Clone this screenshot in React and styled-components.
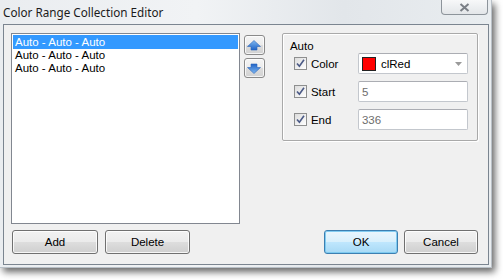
import React from "react";
import styled, { createGlobalStyle, css } from "styled-components";

const Global = createGlobalStyle`
  html, body { margin: 0; padding: 0; background: #ffffff; }
  body { font-family: "Liberation Sans", Arial, sans-serif; }
  * { box-sizing: border-box; }
`;

const Stage = styled.div`
  width: 503px;
  height: 280px;
  overflow: hidden;
  background: #ffffff;
`;

const Window = styled.div`
  width: 492px;
  height: 268px;
  display: flex;
  flex-direction: column;
  background: linear-gradient(90deg, #eaedf0 0%, #f1f3f5 40%, #e2e6ea 70%, #e9edf0 100%);
  box-shadow: 3px 4px 7px rgba(0, 0, 0, 0.6);
  border-right: 1px solid #b9c0c7;
  border-bottom: 1px solid #b9c0c7;
`;

const TitleBar = styled.div`
  height: 24px;
  display: flex;
  align-items: flex-start;
  justify-content: space-between;
  padding: 0 3px 0 3px;
`;

const Title = styled.div`
  font-family: "Noto Sans", "Open Sans", sans-serif;
  font-size: 11.7px;
  color: #1b1b1b;
  margin-top: 4px;
`;

const CloseButton = styled.div`
  width: 47px;
  height: 15px;
  border: 1px solid #8d949b;
  border-top: none;
  border-radius: 0 0 4px 4px;
  background: linear-gradient(#f7f8f9, #e3e6e9);
  display: flex;
  align-items: center;
  justify-content: center;
`;

const Client = styled.div`
  flex: 1;
  margin: 0 2px 2px 3px;
  border: 1px solid #7b8590;
  background: #f0f0f0;
  display: flex;
  flex-direction: column;
  padding: 8px 10px 0 7px;
`;

const TopRow = styled.div`
  display: flex;
  align-items: flex-start;
`;

const ListBox = styled.div`
  width: 230px;
  height: 191px;
  border: 1px solid #828790;
  background: #ffffff;
  padding: 1px;
  font-size: 11.5px;
`;

const ListItem = styled.div`
  height: ${(p) => (p.$selected ? 14 : 13)}px;
  line-height: ${(p) => (p.$selected ? 14 : 13)}px;
  padding-left: 2px;
  color: ${(p) => (p.$selected ? "#ffffff" : "#000000")};
  background: ${(p) => (p.$selected ? "#3399ff" : "transparent")};
  white-space: nowrap;
`;

const ArrowCol = styled.div`
  display: flex;
  flex-direction: column;
  gap: 3px;
  margin: 2px 0 0 4px;
`;

const ArrowButton = styled.div`
  width: 21px;
  height: 20px;
  border: 1px solid #8a8a8a;
  border-radius: 3px;
  background: linear-gradient(#f4f4f4 0%, #ececec 48%, #dcdcdc 52%, #d2d2d2 100%);
  box-shadow: inset 0 0 0 1px rgba(255, 255, 255, 0.75);
  display: flex;
  align-items: center;
  justify-content: center;
`;

const Group = styled.div`
  width: 197px;
  height: 108px;
  margin-left: 17px;
  border: 1px solid #a9a9a9;
  border-radius: 2px;
  box-shadow: inset 1px 1px 0 #ffffff, 1px 1px 0 #ffffff;
  padding: 4px 9px 0 7px;
  font-size: 11.5px;
`;

const GroupTitle = styled.div`
  height: 14px;
  line-height: 14px;
  color: #000;
  margin-top: 1px;
`;

const FieldRow = styled.div`
  display: flex;
  align-items: center;
  height: 21px;
  margin-top: ${(p) => p.$mt}px;
`;

const CheckLabel = styled.div`
  width: 68px;
  display: flex;
  align-items: center;
  gap: 4px;
  padding-left: 4px;
  color: #000;
`;

const CheckBoxBox = styled.div`
  width: 13px;
  height: 13px;
  border: 1px solid #8e8f8f;
  background: linear-gradient(135deg, #dcdcdc, #ffffff);
  padding: 1px;
  display: flex;
`;

const fieldBox = css`
  width: 110px;
  height: 21px;
  border: 1px solid #c3c7cd;
  border-top-color: #abadb3;
  border-radius: 2px;
  background: #ffffff;
  display: flex;
  align-items: center;
`;

const Combo = styled.div`
  ${fieldBox};
  padding: 0 5px 0 3px;
  gap: 5px;
  color: #000;
`;

const Swatch = styled.div`
  width: 14px;
  height: 14px;
  background: #ff0000;
  border: 1px solid #222;
`;

const ComboText = styled.div`
  flex: 1;
`;

const Edit = styled.div`
  ${fieldBox};
  padding-left: 3px;
  color: #6d6d6d;
`;

const BottomRow = styled.div`
  display: flex;
  align-items: center;
  margin-top: 6px;
  padding-left: 1px;
`;

const Spacer = styled.div`
  flex: 1;
`;

const Button = styled.div`
  width: ${(p) => p.$w}px;
  height: 24px;
  margin-left: ${(p) => p.$ml || 0}px;
  border: 1px solid ${(p) => (p.$default ? "#3c7fb1" : "#707070")};
  border-radius: 3px;
  font-size: 11.5px;
  color: #000;
  display: flex;
  align-items: center;
  justify-content: center;
  background: ${(p) =>
    p.$default
      ? "linear-gradient(#eaf6fd 0%, #d9f0fc 48%, #bee6fd 52%, #a7d9f5 100%)"
      : "linear-gradient(#f2f2f2 0%, #ebebeb 48%, #dddddd 52%, #cfcfcf 100%)"};
  box-shadow: inset 0 0 0 1px ${(p) => (p.$default ? "rgba(120,200,240,0.9)" : "rgba(255,255,255,0.8)")};
`;

const Check = () => (
  <CheckBoxBox>
    <svg width="9" height="9" viewBox="0 0 9 9">
      <path d="M1 4.5 L3.4 7.3 L8 0.8" fill="none" stroke="#4b5a86" strokeWidth="1.6" />
    </svg>
  </CheckBoxBox>
);

const Arrow = ({ down }) => (
  <svg width="14" height="11" viewBox="0 0 14 11" style={down ? { transform: "scaleY(-1)" } : undefined}>
    <defs>
      <linearGradient id={down ? "ag2" : "ag1"} x1="0" y1="0" x2="0" y2="1">
        <stop offset="0" stopColor="#7fb8f0" />
        <stop offset="1" stopColor="#1f63c7" />
      </linearGradient>
    </defs>
    <path d="M7 0.5 L13.5 6.5 L10 6.5 L10 10 L4 10 L4 6.5 L0.5 6.5 Z" fill={`url(#${down ? "ag2" : "ag1"})`} stroke="#2b64b8" strokeWidth="0.6" />
  </svg>
);

export default function App() {
  return (
    <Stage>
      <Global />
      <Window>
        <TitleBar>
          <Title>Color Range Collection Editor</Title>
          <CloseButton>
            <svg width="11" height="9" viewBox="0 0 11 9">
              <path d="M1.5 1 L9.5 8 M9.5 1 L1.5 8" stroke="#7a7f86" strokeWidth="2" />
            </svg>
          </CloseButton>
        </TitleBar>
        <Client>
          <TopRow>
            <ListBox>
              <ListItem $selected>Auto - Auto - Auto</ListItem>
              <ListItem>Auto - Auto - Auto</ListItem>
              <ListItem>Auto - Auto - Auto</ListItem>
            </ListBox>
            <ArrowCol>
              <ArrowButton><Arrow /></ArrowButton>
              <ArrowButton><Arrow down /></ArrowButton>
            </ArrowCol>
            <Group>
              <GroupTitle>Auto</GroupTitle>
              <FieldRow $mt={0}>
                <CheckLabel><Check />Color</CheckLabel>
                <Combo>
                  <Swatch />
                  <ComboText>clRed</ComboText>
                  <svg width="7" height="4" viewBox="0 0 7 4">
                    <path d="M0 0 L7 0 L3.5 4 Z" fill="#9a9a9a" />
                  </svg>
                </Combo>
              </FieldRow>
              <FieldRow $mt={7}>
                <CheckLabel><Check />Start</CheckLabel>
                <Edit>5</Edit>
              </FieldRow>
              <FieldRow $mt={7}>
                <CheckLabel><Check />End</CheckLabel>
                <Edit>336</Edit>
              </FieldRow>
            </Group>
          </TopRow>
          <BottomRow>
            <Button $w={86}>Add</Button>
            <Button $w={85} $ml={7}>Delete</Button>
            <Spacer />
            <Button $w={74} $default>OK</Button>
            <Button $w={74} $ml={6}>Cancel</Button>
          </BottomRow>
        </Client>
      </Window>
    </Stage>
  );
}
